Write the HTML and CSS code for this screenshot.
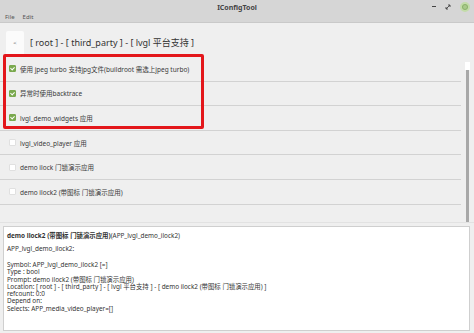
FILE: index.html
```html
<!DOCTYPE html>
<html lang="en">
<head>
    <meta charset="UTF-8">
    <title>IConfigTool</title>
    <link rel="stylesheet" href="styles.css">
</head>
<body>
    <div class="window">
        <header class="titlebar">
            <span class="title">IConfigTool</span>
            <div class="win-buttons">
                <span class="btn-min"></span>
                <svg class="btn-max" width="6" height="6" viewBox="0 0 6 6">
                    <path d="M1 5 L5 1 M3 1 H5 V3 M1 3 V5 H3" stroke="#444" stroke-width="0.9" fill="none"/>
                </svg>
                <span class="btn-close"></span>
            </div>
        </header>
        <nav class="menubar">
            <span>File</span>
            <span>Edit</span>
        </nav>

        <div class="crumbs">
            <button class="back">&lt;</button>
            <span class="path">[ root ] - [ third_party ] - [ lvgl 平台支持 ]</span>
        </div>

        <div class="list-wrap">
            <div class="list">
                <div class="row"><span class="check on"></span>使用 jpeg turbo 支持jpg文件(buildroot 需选上jpeg turbo)</div>
                <div class="row"><span class="check on"></span>异常时使用backtrace</div>
                <div class="row"><span class="check on"></span>lvgl_demo_widgets 应用</div>
                <div class="row"><span class="check"></span>lvgl_video_player 应用</div>
                <div class="row"><span class="check"></span>demo ilock 门锁演示应用</div>
                <div class="row"><span class="check"></span>demo ilock2 (带图标 门锁演示应用)</div>
            </div>
            <div class="scrollbar">
                <span class="scroll-cap"></span>
                <span class="scroll-thumb"></span>
            </div>
            <div class="highlight"></div>
        </div>

        <div class="details">
            <div class="d-title"><b>demo ilock2 (带图标 门锁演示应用)</b>(APP_lvgl_demo_ilock2)</div>
            <div class="d-name">APP_lvgl_demo_ilock2:</div>
            <div class="d-lines">
                <div>Symbol: APP_lvgl_demo_ilock2 [=]</div>
                <div>Type : bool</div>
                <div>Prompt: demo ilock2 (带图标 门锁演示应用)</div>
                <div>Location: [ root ] - [ third_party ] - [ lvgl 平台支持 ] - [ demo ilock2 (带图标 门锁演示应用) ]</div>
                <div>refcount: 0:0</div>
                <div>Depend on:</div>
                <div>Selects: APP_media_video_player=[]</div>
            </div>
        </div>
    </div>
</body>
</html>
```

FILE: styles.css
```css
:root {
    --bar-color: #d6d6d6;
    --bg-color: #efefef;
    --line-color: #d2d2d2;
    --text-color: #3a3a3a;
    --check-color: #7aa94e;
    --mark-color: #e3161b;
}

* {
    margin: 0;
    padding: 0;
    box-sizing: border-box;
}

body {
    font-family: "Noto Sans", "Noto Sans CJK SC", sans-serif;
    background-color: var(--bg-color);
    color: var(--text-color);
    width: 474px;
    height: 333px;
    overflow: hidden;
}

.window {
    display: flex;
    flex-direction: column;
    height: 333px;
}

.titlebar {
    position: relative;
    height: 12px;
    background-color: var(--bar-color);
    display: flex;
    align-items: center;
    justify-content: center;
}

.title {
    font-size: 7px;
    font-weight: bold;
    color: #444;
    padding-top: 2px;
}

.win-buttons {
    position: absolute;
    right: 4px;
    top: 1px;
    display: flex;
    align-items: center;
    gap: 9px;
    height: 11px;
}

.btn-min {
    width: 4px;
    height: 1px;
    background-color: #444;
}

.btn-close {
    width: 10px;
    height: 10px;
    border-radius: 50%;
    background-color: #a9c98a;
    border: 2px solid #c3dca9;
    box-shadow: inset 0 0 0 1px #8ab26a;
}

.menubar {
    height: 11px;
    background-color: var(--bar-color);
    border-bottom: 1px solid #c9c9c9;
    display: flex;
    gap: 8px;
    padding-left: 5px;
    font-size: 6px;
    color: #555;
    line-height: 10px;
}

.crumbs {
    display: flex;
    align-items: center;
    gap: 6px;
    padding: 7px 0 0 6px;
    height: 33px;
}

.back {
    width: 18px;
    height: 25px;
    border: none;
    border-radius: 2px;
    background-color: #fbfbfb;
    font-family: "Noto Sans", sans-serif;
    font-size: 6px;
    color: #555;
}

.path {
    font-size: 9px;
    color: #333;
    padding-bottom: 1px;
}

.list-wrap {
    position: relative;
    display: flex;
    height: 167px;
    border-bottom: 1px solid #e2e2e2;
}

.list {
    flex: 1;
    padding-top: 1px;
}

.row {
    height: 24.6px;
    border-bottom: 1px solid var(--line-color);
    display: flex;
    align-items: center;
    gap: 4px;
    padding-left: 9px;
    font-size: 6.5px;
    margin-right: 1px;
}

.check {
    width: 7px;
    height: 7px;
    border-radius: 1px;
    background-color: #fff;
    border: 1px solid #e0e0e0;
    position: relative;
}

.check.on {
    background-color: var(--check-color);
    border-color: var(--check-color);
}

.check.on::after {
    content: "";
    position: absolute;
    left: 1px;
    top: 0;
    width: 2px;
    height: 3px;
    border: solid #fff;
    border-width: 0 1px 1px 0;
    transform: rotate(45deg);
}

.scrollbar {
    width: 10px;
    display: flex;
    flex-direction: column;
    align-items: center;
    padding-top: 6px;
    margin-right: 2px;
}

.scroll-cap {
    width: 5px;
    height: 8px;
    background-color: #fff;
}

.scroll-thumb {
    width: 3px;
    flex: 1;
    background-color: #a8a8a8;
    margin-left: 1px;
}

.highlight {
    position: absolute;
    left: 3px;
    top: -2px;
    width: 201px;
    height: 75px;
    border: 3px solid var(--mark-color);
    border-radius: 2px;
}

.details {
    margin: 3px 4px 0 3px;
    height: 105px;
    background-color: #fff;
    border: 1px solid #cfcfcf;
    padding: 5px 3px;
    font-size: 6.4px;
    color: #333;
}

.d-title {
    line-height: 8px;
}

.d-name {
    line-height: 8px;
    margin-top: 5px;
}

.d-lines {
    margin-top: 8px;
    line-height: 7.3px;
}
```
